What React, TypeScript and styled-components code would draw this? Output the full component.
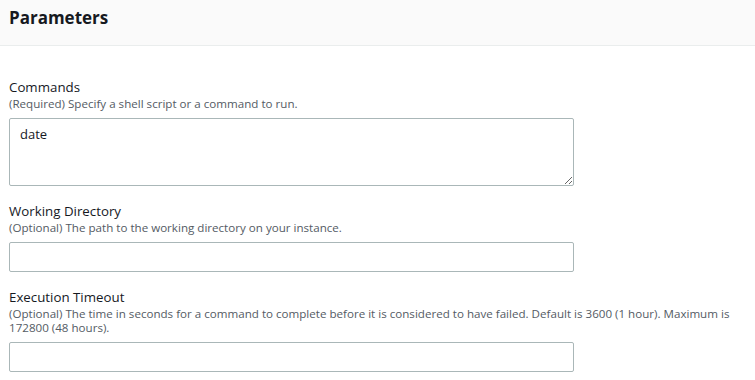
import styled, { createGlobalStyle } from "styled-components";

const GlobalStyle = createGlobalStyle`
  body {
    margin: 0;
    background: #ffffff;
    font-family: "Open Sans", "Noto Sans", Arial, sans-serif;
    color: #16191f;
  }
`;

type FieldProps = {
  label: string;
  hint: string;
  children: React.ReactNode;
};

function Field({ label, hint, children }: FieldProps) {
  return (
    <FieldWrapper>
      <Label>{label}</Label>
      <Hint>{hint}</Hint>
      <Control>{children}</Control>
    </FieldWrapper>
  );
}

export default function App() {
  return (
    <>
      <GlobalStyle />
      <Panel>
        <Header>
          <Title>Parameters</Title>
        </Header>
        <Body>
          <Field
            label="Commands"
            hint="(Required) Specify a shell script or a command to run."
          >
            <TextArea defaultValue="date" />
          </Field>
          <Field
            label="Working Directory"
            hint="(Optional) The path to the working directory on your instance."
          >
            <Input type="text" />
          </Field>
          <Field
            label="Execution Timeout"
            hint="(Optional) The time in seconds for a command to complete before it is considered to have failed. Default is 3600 (1 hour). Maximum is 172800 (48 hours)."
          >
            <Input type="text" />
          </Field>
        </Body>
      </Panel>
    </>
  );
}

const Panel = styled.div`
  width: 755px;
  background: #ffffff;
`;

const Header = styled.div`
  height: 46px;
  box-sizing: border-box;
  padding: 7px 9px 0;
  background: #fafafa;
  border-bottom: 1px solid #eaeded;
`;

const Title = styled.h2`
  margin: 0;
  font-size: 17px;
  line-height: 22px;
  font-weight: 700;
  color: #16191f;
`;

const Body = styled.div`
  display: flex;
  flex-direction: column;
  gap: 15px;
  padding: 31px 9px 20px;
`;

const FieldWrapper = styled.div`
  display: flex;
  flex-direction: column;
`;

const Label = styled.div`
  font-size: 13.3px;
  line-height: 20px;
  color: #16191f;
`;

const Hint = styled.div`
  font-size: 11.6px;
  line-height: 14px;
  color: #545b64;
  padding-right: 6px;
`;

const Control = styled.div`
  margin-top: 7px;
  width: 565px;
`;

const inputBase = `
  display: block;
  width: 100%;
  box-sizing: border-box;
  border: 1px solid #aab7b8;
  border-radius: 2px;
  background: #ffffff;
  font-family: "Open Sans", "Noto Sans", Arial, sans-serif;
  font-size: 13px;
  color: #16191f;
  outline: none;
`;

const TextArea = styled.textarea`
  ${inputBase}
  height: 68px;
  padding: 5px 10px;
  line-height: 20px;
  resize: vertical;
`;

const Input = styled.input`
  ${inputBase}
  height: 30px;
  padding: 4px 10px;
`;
